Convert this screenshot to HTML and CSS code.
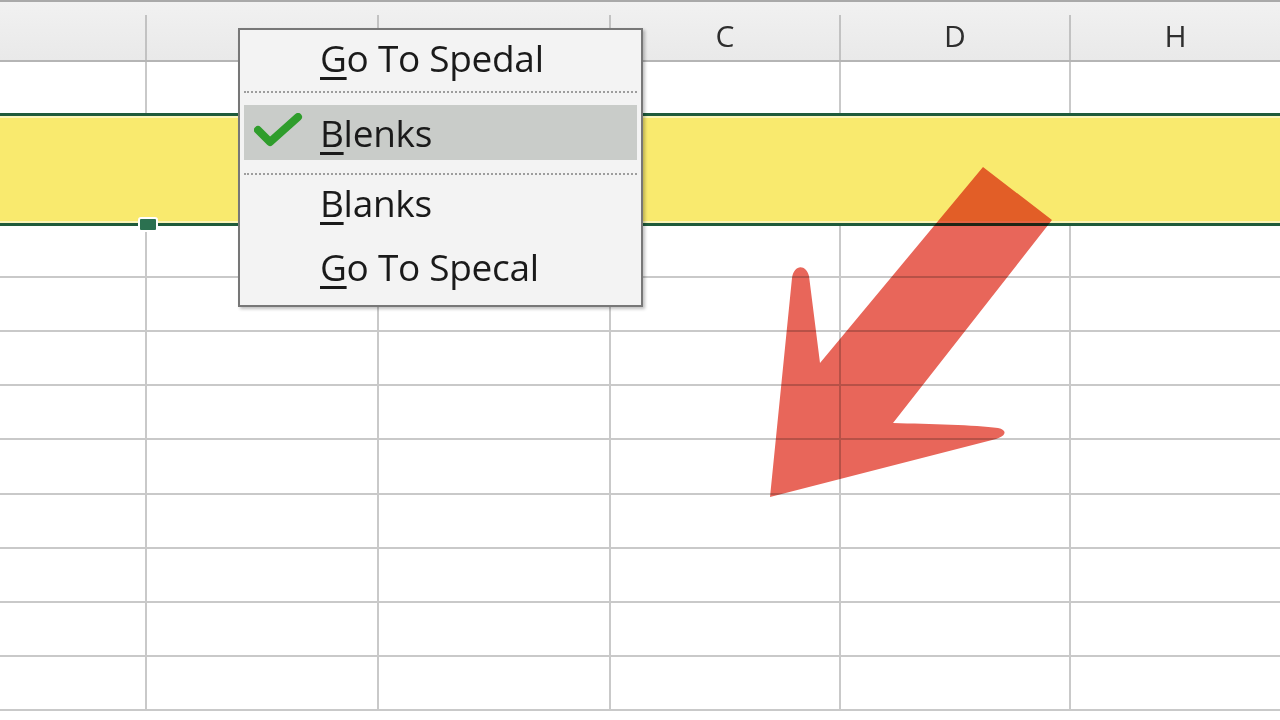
FILE: index.html
```html
<!DOCTYPE html>
<html>
<head>
<meta charset="utf-8">
<link rel="stylesheet" href="styles.css">
</head>
<body>
<div class="sheet">
  <div class="header">
    <div class="hcell c1"></div>
    <div class="hcell c2"></div>
    <div class="hcell c3"></div>
    <div class="hcell c4">C</div>
    <div class="hcell c5">D</div>
    <div class="hcell c6">H</div>
  </div>
  <div class="row first">
    <div class="cell c1"></div><div class="cell c2"></div><div class="cell c3"></div><div class="cell c4"></div><div class="cell c5"></div><div class="cell c6"></div>
  </div>
  <div class="band"></div>
  <div class="row short">
    <div class="cell c1"></div><div class="cell c2"></div><div class="cell c3"></div><div class="cell c4"></div><div class="cell c5"></div><div class="cell c6"></div>
  </div>
  <div class="row"><div class="cell c1"></div><div class="cell c2"></div><div class="cell c3"></div><div class="cell c4"></div><div class="cell c5"></div><div class="cell c6"></div></div>
  <div class="row"><div class="cell c1"></div><div class="cell c2"></div><div class="cell c3"></div><div class="cell c4"></div><div class="cell c5"></div><div class="cell c6"></div></div>
  <div class="row"><div class="cell c1"></div><div class="cell c2"></div><div class="cell c3"></div><div class="cell c4"></div><div class="cell c5"></div><div class="cell c6"></div></div>
  <div class="row tall"><div class="cell c1"></div><div class="cell c2"></div><div class="cell c3"></div><div class="cell c4"></div><div class="cell c5"></div><div class="cell c6"></div></div>
  <div class="row"><div class="cell c1"></div><div class="cell c2"></div><div class="cell c3"></div><div class="cell c4"></div><div class="cell c5"></div><div class="cell c6"></div></div>
  <div class="row"><div class="cell c1"></div><div class="cell c2"></div><div class="cell c3"></div><div class="cell c4"></div><div class="cell c5"></div><div class="cell c6"></div></div>
  <div class="row"><div class="cell c1"></div><div class="cell c2"></div><div class="cell c3"></div><div class="cell c4"></div><div class="cell c5"></div><div class="cell c6"></div></div>
  <div class="row"><div class="cell c1"></div><div class="cell c2"></div><div class="cell c3"></div><div class="cell c4"></div><div class="cell c5"></div><div class="cell c6"></div></div>
</div>

<div class="handle"></div>

<div class="menu">
  <div class="item top"><span class="label"><u>G</u>o To Spedal</span></div>
  <div class="sep"></div>
  <div class="item selected">
    <svg class="check" width="50" height="40" viewBox="0 0 50 40"><path d="M4 17 L16 29 L44 4" fill="none" stroke="#2f9d2c" stroke-width="8" stroke-linejoin="round" stroke-linecap="round"/></svg>
    <span class="label"><u>B</u>lenks</span>
  </div>
  <div class="sep"></div>
  <div class="item low"><span class="label"><u>B</u>lanks</span></div>
  <div class="item low"><span class="label"><u>G</u>o To Specal</span></div>
</div>

<svg class="arrow" width="1280" height="720" viewBox="0 0 1280 720">
  <path d="M983 167 L1052 220 L893 423 C930 424 975 425 998 428 C1008 430 1006 436 996 439 L770 497 L792 278 C794 264 806 264 809 276 L820 363 Z" fill="#e8665a"/>
</svg>
</body>
</html>
```
FILE: styles.css
```css
html, body {
  margin: 0;
  padding: 0;
}
body {
  width: 1280px;
  height: 720px;
  overflow: hidden;
  background: #ffffff;
  font-family: "Open Sans", "Noto Sans", "Liberation Sans", sans-serif;
  position: relative;
}
.sheet {
  display: flex;
  flex-direction: column;
}
.header {
  display: flex;
  height: 62px;
  box-sizing: border-box;
  background: linear-gradient(#f1f1f1, #e9e9e9);
  border-top: 2px solid #a9a9a9;
  border-bottom: 2px solid #b5b5b5;
  padding-top: 13px;
}
.hcell {
  box-sizing: border-box;
  border-right: 2px solid #c2c2c2;
  display: flex;
  align-items: center;
  justify-content: center;
  font-size: 30px;
  color: #2e2e2e;
  padding-bottom: 4px;
}
.c1 { width: 147px; flex: none; }
.c2 { width: 232px; flex: none; }
.c3 { width: 232px; flex: none; }
.c4 { width: 230px; flex: none; }
.c5 { width: 230px; flex: none; }
.c6 { flex: 1; }
.hcell.c6, .cell.c6 { border-right: none; }
.row {
  display: flex;
  height: 54px;
}
.row.first { height: 51px; }
.row.short { height: 52px; }
.row.tall { height: 55px; }
.cell {
  box-sizing: border-box;
  border-right: 2px solid #c9c9c9;
  border-bottom: 2px solid #c9c9c9;
}
.row.first .cell { border-bottom: none; }
.band {
  height: 113px;
  box-sizing: border-box;
  background: #f9ea6e;
  border-top: 3px solid #1f5b3b;
  border-bottom: 3px solid #1f5b3b;
  box-shadow: inset 0 2px 0 #fbf5b8, inset 0 -2px 0 #fbf5b8;
}
.handle {
  position: absolute;
  left: 138px;
  top: 217px;
  width: 20px;
  height: 15px;
  background: #2b7150;
  border: 2px solid #ffffff;
  border-radius: 3px;
  box-sizing: border-box;
}
.menu {
  position: absolute;
  left: 238px;
  top: 28px;
  width: 405px;
  height: 279px;
  box-sizing: border-box;
  background: #f3f3f3;
  border: 2px solid #777777;
  box-shadow: 2px 2px 3px rgba(0,0,0,0.25);
  padding: 0 4px;
  display: flex;
  flex-direction: column;
}
.item {
  position: relative;
  height: 64px;
  box-sizing: border-box;
  display: flex;
  align-items: center;
  padding-left: 76px;
  flex: none;
}
.item.top { height: 60px; padding-bottom: 10px; }
.item.selected {
  height: 55px;
  padding-bottom: 4px;
  background: #c9ccc9;
  margin: 12px 0 12px;
}
.item.low { padding-bottom: 13px; }
.label {
  font-size: 37px;
  color: #1a1a1a;
  letter-spacing: -0.3px;
  line-height: 1;
  padding-top: 4px;
}
.label u {
  text-decoration-thickness: 3px;
  text-underline-offset: 5px;
}
.sep {
  height: 0;
  border-top: 2px dotted #9d9d9d;
  margin: 1px 0 0;
  flex: none;
}
.check {
  position: absolute;
  left: 10px;
  top: 8px;
}
.arrow {
  position: absolute;
  left: 0;
  top: 0;
  mix-blend-mode: multiply;
  pointer-events: none;
}
```
